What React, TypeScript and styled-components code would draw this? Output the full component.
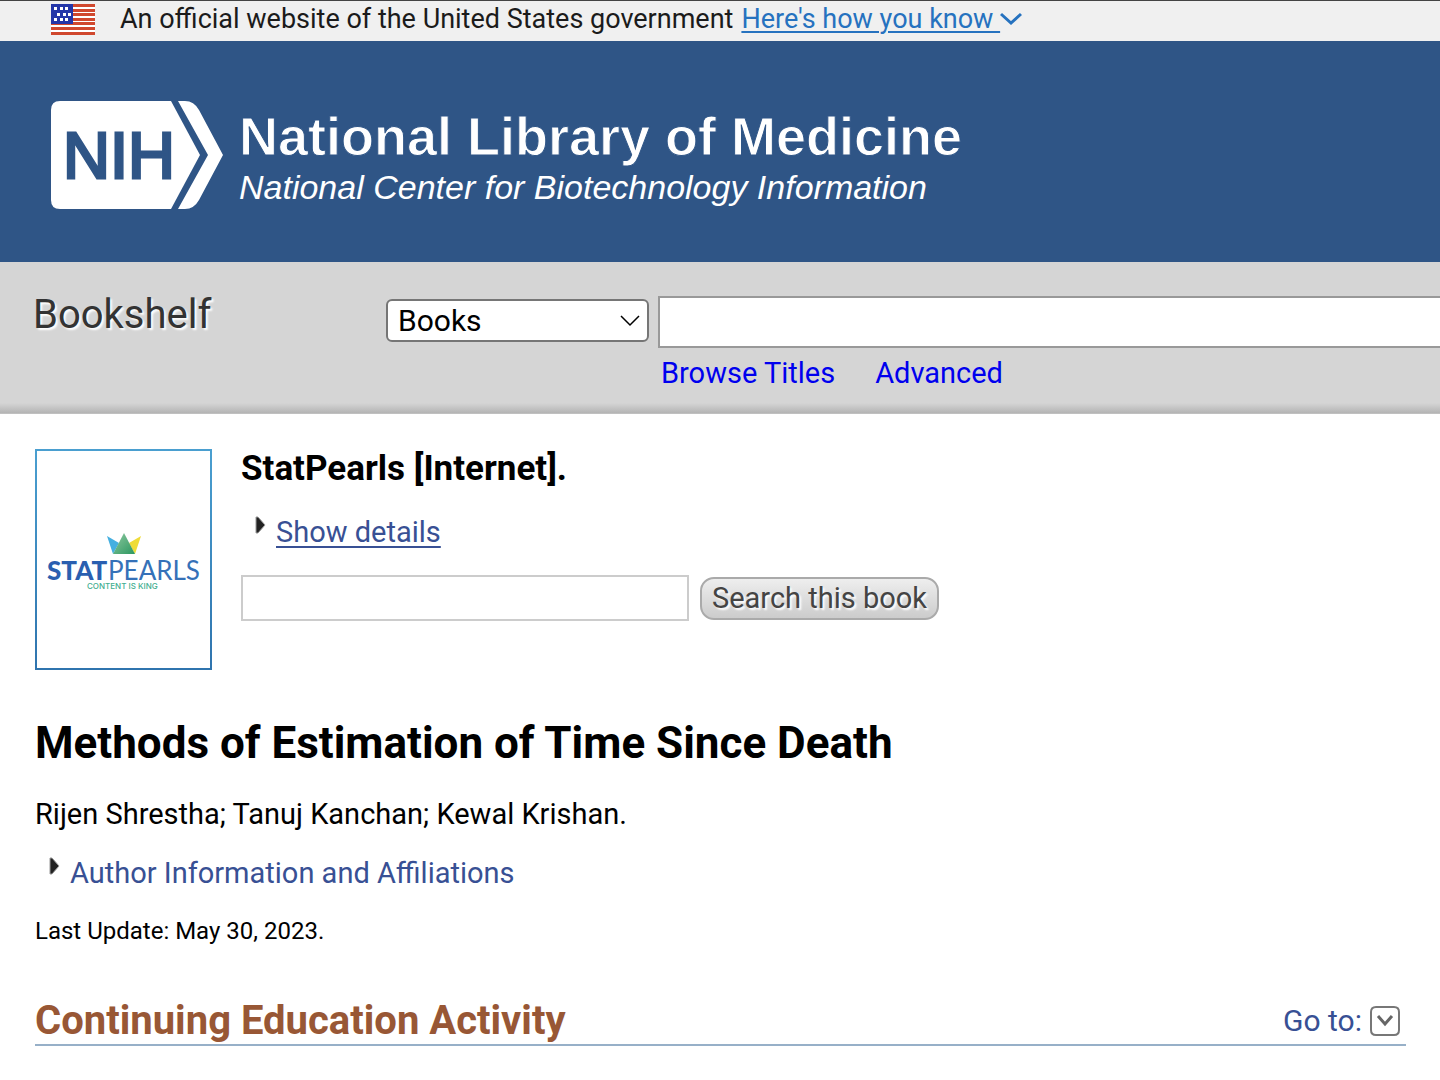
import React from "react";
import styled, { createGlobalStyle } from "styled-components";

const GlobalStyle = createGlobalStyle`
  *, *::before, *::after { box-sizing: border-box; }
  body {
    margin: 0;
    background: #fff;
    color: #000;
    font-family: Roboto, "Liberation Sans", sans-serif;
    font-size: 29px;
    line-height: 36px;
    overflow-x: hidden;
  }
  h1, h2, p { margin: 0; }
  input, select, button { font-family: inherit; margin: 0; }
`;

const Banner = styled.div`
  display: flex;
  align-items: center;
  height: 41px;
  padding: 0 51px 4px;
  border-top: 1px solid #444;
  background: #f0f0f0;
  color: #1b1b1b;
  font-size: 27px;
`;

const Flag = styled.svg`
  flex: none;
  width: 44px;
  height: 31px;
  margin-right: 25px;
`;

const BannerLink = styled.a`
  display: flex;
  align-items: center;
  margin-left: 8px;
  color: #2672bf;
  white-space: pre;
  text-decoration-thickness: 2px;
  text-underline-offset: 3px;
`;

const BrandBar = styled.header`
  padding: 60px 51px 53px;
  background: #2f5586;
`;

const BrandLink = styled.a`
  display: flex;
  gap: 16px;
  color: #fff;
  text-decoration: none;
  font-family: "Liberation Sans", Arial, sans-serif;
  white-space: nowrap;
`;

const NihMark = styled.svg`
  flex: none;
  width: 172px;
  height: 108px;
`;

const BrandText = styled.span`
  display: flex;
  flex-direction: column;
  padding-top: 4px;
`;

const BrandName = styled.span`
  font-size: 54px;
  font-weight: 700;
  line-height: 62px;
  -webkit-text-stroke: 1px #2f5586;
`;

const BrandCenter = styled.span`
  font-size: 34px;
  font-style: italic;
  line-height: 40px;
`;

const SearchBar = styled.form`
  display: flex;
  height: 152px;
  padding: 34px 0 0 33px;
  overflow: hidden;
  background: linear-gradient(#d5d5d5 calc(100% - 10px), #b4b4b4);
  border-bottom: 1px solid #c0c0c0;
`;

const ShelfName = styled.a`
  flex: none;
  width: 353px;
  color: #333;
  font-size: 40px;
  line-height: 38px;
  text-decoration: none;
  text-shadow: 2px 2px 2px #fff;
`;

const SelectWrap = styled.div`
  position: relative;
  flex: none;
  width: 263px;
  height: 43px;
  margin: 3px 9px 0 0;
`;

const DatabaseSelect = styled.select`
  appearance: none;
  width: 100%;
  height: 100%;
  padding: 0 10px;
  border: 2px solid #767676;
  border-radius: 6px;
  background: #fff;
  color: #000;
  font-size: 30px;
`;

const SelectArrow = styled.svg`
  position: absolute;
  top: 15px;
  right: 9px;
  width: 20px;
  height: 13px;
  pointer-events: none;
`;

const TermColumn = styled.div`
  flex: 1 0 820px;
`;

const TermInput = styled.input`
  display: block;
  width: 100%;
  height: 52px;
  padding: 0 8px;
  border: 2px solid #999;
  background: #fff;
  font-size: 29px;
`;

const TermLinks = styled.nav`
  display: flex;
  gap: 40px;
  padding: 7px 3px 0;

  a {
    color: #00e;
    text-decoration: none;
  }
`;

const Main = styled.main`
  padding: 35px 34px 0 35px;
`;

const BookHeader = styled.section`
  display: flex;
  gap: 29px;
`;

const Cover = styled.svg`
  flex: none;
  width: 177px;
  height: 221px;
`;

const BookTitle = styled.h2`
  margin-bottom: 25px;
  font-size: 35px;
  line-height: 40px;
`;

const DisclosureLink = styled.a<{ $underlined?: boolean }>`
  display: flex;
  gap: 10px;
  padding-left: 14px;
  color: #385094;
  text-decoration: ${(p) => (p.$underlined ? "underline" : "none")};
  text-decoration-thickness: 2px;
  text-underline-offset: 4px;
`;

const Triangle = styled.svg`
  flex: none;
  width: 11px;
  height: 18px;
  margin-top: 2px;
`;

const BookSearch = styled.form`
  display: flex;
  align-items: center;
  gap: 11px;
  margin-top: 25px;
`;

const BookInput = styled.input`
  width: 448px;
  height: 46px;
  padding: 0 8px;
  border: 2px solid #ccc;
  background: #fff;
  font-size: 29px;
`;

const BookButton = styled.button`
  height: 43px;
  padding: 0 10px;
  border: 2px solid #aaa;
  border-radius: 14px;
  background: linear-gradient(#eee, #ccc);
  color: #444;
  font-size: 29px;
  line-height: 36px;
  text-shadow: 2px 2px 2px #fff;
`;

const ChapterTitle = styled.h1`
  margin-top: 46px;
  font-size: 44px;
  line-height: 54px;
`;

const Authors = styled.p`
  margin: 26px 0 23px;
`;

const Updated = styled.p`
  margin-top: 22px;
  font-size: 24px;
`;

const SectionHead = styled.div`
  display: flex;
  justify-content: space-between;
  align-items: center;
  margin-top: 49px;
  border-bottom: 2px solid #97b0c8;
`;

const SectionTitle = styled.h2`
  color: #985735;
  font-size: 40px;
  line-height: 46px;
`;

const GoTo = styled.button`
  display: flex;
  align-items: center;
  gap: 8px;
  padding: 0 6px 0 0;
  border: 0;
  background: none;
  color: #385094;
  font-size: 30px;
  line-height: 36px;
`;

const GoToIcon = styled.svg`
  width: 30px;
  height: 30px;
`;

const stripes = [0, 5, 9, 14, 18, 23, 28];
const stars = [
  [3, 3], [9, 3], [14, 3],
  [6, 9], [12, 9], [17, 9],
  [3, 14], [9, 14], [14, 14],
];

function DisclosureTriangle() {
  return (
    <Triangle viewBox="0 0 11 18" aria-hidden="true">
      <path d="M1 1 H3 L10 9 L3 17 H1 Z" fill="#222" stroke="#999" strokeWidth="1" />
    </Triangle>
  );
}

export default function App() {
  return (
    <>
      <GlobalStyle />
      <Banner>
        <Flag viewBox="0 0 44 31" role="img" aria-label="U.S. flag">
          <rect width="44" height="31" fill="#fff" />
          {stripes.map((y) => (
            <rect key={y} y={y} width="44" height="3" fill="#d0482e" />
          ))}
          <rect width="22" height="20" fill="#2436a8" />
          {stars.map(([x, y]) => (
            <rect key={`${x}-${y}`} x={x} y={y} width="3" height="3" fill="#fff" />
          ))}
        </Flag>
        <span>An official website of the United States government</span>
        <BannerLink href="#how">
          {"Here's how you know "}
          <svg width="23" height="14" viewBox="0 0 23 14" aria-hidden="true">
            <path d="M1 2 L11 11 L21 2" fill="none" stroke="#2672bf" strokeWidth="3" />
          </svg>
        </BannerLink>
      </Banner>

      <BrandBar>
        <BrandLink href="#ncbi">
          <NihMark viewBox="0 0 172 108" aria-hidden="true">
            <path d="M9 0 H120 L149 54 L120 108 H9 Q0 108 0 99 V9 Q0 0 9 0 Z" fill="#fff" />
            <path d="M127 0 H134 Q143 0 148 9 L172 54 L148 99 Q143 108 134 108 H127 L157 54 Z" fill="#fff" />
            <text
              x="12"
              y="77"
              fontFamily="Liberation Sans, Arial, sans-serif"
              fontSize="65"
              fill="#2f5586"
              stroke="#2f5586"
              strokeWidth="3"
            >
              NIH
            </text>
          </NihMark>
          <BrandText>
            <BrandName>National Library of Medicine</BrandName>
            <BrandCenter>National Center for Biotechnology Information</BrandCenter>
          </BrandText>
        </BrandLink>
      </BrandBar>

      <SearchBar role="search" onSubmit={(e) => e.preventDefault()}>
        <ShelfName href="#bookshelf">Bookshelf</ShelfName>
        <SelectWrap>
          <DatabaseSelect aria-label="Database" defaultValue="books">
            <option value="books">Books</option>
          </DatabaseSelect>
          <SelectArrow viewBox="0 0 20 13" aria-hidden="true">
            <path d="M1 2 L10 11 L19 2" fill="none" stroke="#000" strokeWidth="1.5" />
          </SelectArrow>
        </SelectWrap>
        <TermColumn>
          <TermInput type="text" aria-label="Search term" />
          <TermLinks>
            <a href="#browse">Browse Titles</a>
            <a href="#advanced">Advanced</a>
          </TermLinks>
        </TermColumn>
      </SearchBar>

      <Main>
        <BookHeader>
          <Cover viewBox="0 0 177 221" role="img" aria-label="StatPearls cover">
            <defs>
              <linearGradient id="frame" x1="0" y1="0" x2="0" y2="1">
                <stop offset="0" stopColor="#4a9fd0" />
                <stop offset="1" stopColor="#2f74ae" />
              </linearGradient>
              <linearGradient id="peak" x1="0" y1="0" x2="1" y2="1">
                <stop offset="0" stopColor="#8fc9a0" />
                <stop offset="1" stopColor="#2c9760" />
              </linearGradient>
            </defs>
            <rect x="1" y="1" width="175" height="219" fill="#fff" stroke="url(#frame)" strokeWidth="2" />
            <path d="M72 87 L84 94 L78 105 Z" fill="#45afe0" />
            <path d="M106 87 L94 94 L100 105 Z" fill="#efdc38" />
            <path d="M89 84 L100 105 H78 Z" fill="url(#peak)" />
            <g fontFamily="Lato, sans-serif">
              <text x="12" y="131" fontSize="26" fontWeight="900" fill="#2a5fb0">STAT</text>
              <text x="73" y="131" fontSize="26" fontWeight="400" fill="#3571b8">PEARLS</text>
            </g>
            <text x="52" y="140" fontFamily="Inter, sans-serif" fontSize="8" fontWeight="500" fill="#3fae90">
              CONTENT IS KING
            </text>
          </Cover>
          <div>
            <BookTitle>StatPearls [Internet].</BookTitle>
            <DisclosureLink href="#details" $underlined>
              <DisclosureTriangle />
              Show details
            </DisclosureLink>
            <BookSearch onSubmit={(e) => e.preventDefault()}>
              <BookInput type="text" aria-label="Search this book" />
              <BookButton type="submit">Search this book</BookButton>
            </BookSearch>
          </div>
        </BookHeader>

        <ChapterTitle>Methods of Estimation of Time Since Death</ChapterTitle>
        <Authors>Rijen Shrestha; Tanuj Kanchan; Kewal Krishan.</Authors>
        <DisclosureLink href="#affiliations">
          <DisclosureTriangle />
          Author Information and Affiliations
        </DisclosureLink>
        <Updated>Last Update: May 30, 2023.</Updated>

        <SectionHead>
          <SectionTitle>Continuing Education Activity</SectionTitle>
          <GoTo type="button">
            Go to:
            <GoToIcon viewBox="0 0 30 30" aria-hidden="true">
              <path d="M6 1 H24 Q29 1 29 6 V24 Q29 29 24 29 H6 Q1 29 1 24 V6 Q1 1 6 1 Z" fill="#fff" stroke="#777" strokeWidth="2" />
              <path d="M8 10 L15 18 L22 10" fill="none" stroke="#666" strokeWidth="3" />
            </GoToIcon>
          </GoTo>
        </SectionHead>
      </Main>
    </>
  );
}
